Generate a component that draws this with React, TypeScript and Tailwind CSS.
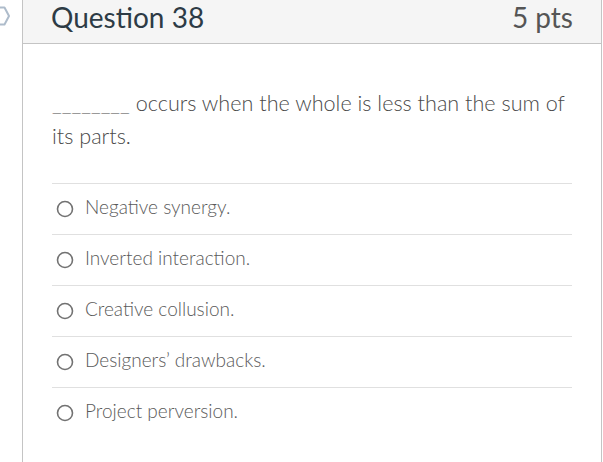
import React from 'react';

const answers = [
  'Negative synergy.',
  'Inverted interaction.',
  'Creative collusion.',
  "Designers\u2019 drawbacks.",
  'Project perversion.',
];

export default function App() {
  return (
    <div className="flex min-h-screen bg-white font-['Lato','Liberation_Sans',sans-serif]">
      {/* left gutter with the cut-off flag icon */}
      <div className="w-[22px] shrink-0">
        <svg width="12" height="26" viewBox="0 0 12 26" className="mt-[3px]">
          <path d="M-2 4.5 H4.5 L9 13 L4.5 21.5 H-2" fill="none" stroke="#aebccb" strokeWidth="2" strokeLinejoin="round" />
        </svg>
      </div>

      {/* question card */}
      <div className="w-[580px] border-x border-[#c4c4c4]">
        <div className="flex h-[44px] items-start justify-between border-b border-[#c4c4c4] bg-[#f5f5f5] pl-[28px] pr-[28px] text-[28px] leading-[34px]">
          <span className="text-[#2d3b45]">Question 38</span>
          <span className="text-[#555]">5 pts</span>
        </div>

        <div className="px-[29px]">
          <p className="mt-[43px] text-[21.6px] font-light leading-[33px] text-[#4a4a4a]">
            ________ occurs when the whole is less than the sum of its parts.
          </p>

          <div className="mt-[30px]">
            {answers.map((a) => (
              <AnswerRow key={a} label={a} />
            ))}
          </div>
        </div>
      </div>
    </div>
  );
}

function AnswerRow({ label }: { label: string }) {
  return (
    <div className="flex h-[51px] items-center border-t border-[#e0e0e0]">
      <svg width="18" height="18" viewBox="0 0 18 18" className="ml-[4px] shrink-0">
        <circle cx="9" cy="9" r="7.5" fill="#fff" stroke="#727272" strokeWidth="1.6" />
      </svg>
      <span className="ml-[11px] pb-[3px] text-[19px] font-light text-[#5a5a5a]">{label}</span>
    </div>
  );
}
